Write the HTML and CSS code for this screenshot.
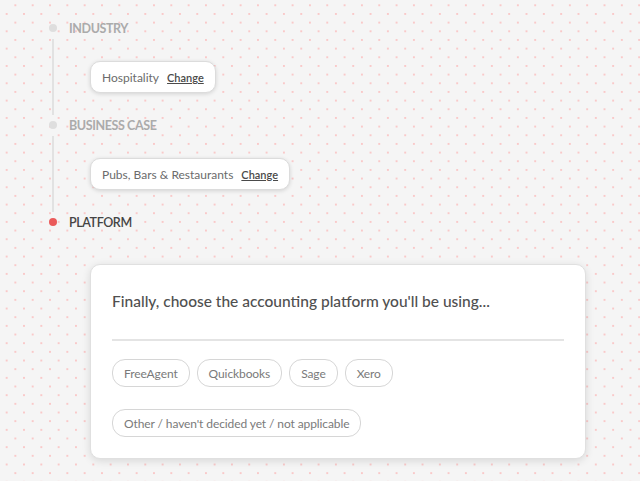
FILE: index.html
```html
<!DOCTYPE html>
<html lang="en">
<head>
<meta charset="utf-8">
<title>Choose platform</title>
<link rel="stylesheet" href="styles.css">
</head>
<body>
<main class="timeline">
  <section class="step done">
    <div class="step-head"><span class="dot"></span><span class="label">INDUSTRY</span></div>
    <div class="step-body">
      <div class="summary"><span class="value">Hospitality</span><a class="change" href="#">Change</a></div>
    </div>
  </section>
  <section class="step done">
    <div class="step-head"><span class="dot"></span><span class="label">BUSINESS CASE</span></div>
    <div class="step-body">
      <div class="summary"><span class="value">Pubs, Bars &amp; Restaurants</span><a class="change" href="#">Change</a></div>
    </div>
  </section>
  <section class="step active">
    <div class="step-head"><span class="dot"></span><span class="label">PLATFORM</span></div>
    <div class="card">
      <h2 class="question">Finally, choose the accounting platform you'll be using...</h2>
      <hr class="divider">
      <div class="options">
        <button class="pill">FreeAgent</button>
        <button class="pill">Quickbooks</button>
        <button class="pill">Sage</button>
        <button class="pill">Xero</button>
      </div>
      <div class="options second">
        <button class="pill">Other / haven't decided yet / not applicable</button>
      </div>
    </div>
  </section>
</main>
</body>
</html>
```
FILE: styles.css
```css
html, body {
  margin: 0;
  height: 100%;
}
body {
  font-family: "Lato", "Noto Sans", sans-serif;
  background-color: #f5f5f5;
  background-image:
    radial-gradient(circle, #f9c9c9 0.8px, transparent 1.2px),
    radial-gradient(circle, #f9c9c9 0.8px, transparent 1.2px);
  background-size: 17.33px 17.33px;
  background-position: 6.7px -3.4px, -2px 5.3px;
}
.timeline {
  padding: 20px 0 0 49px;
}
.step-head {
  display: flex;
  align-items: center;
  gap: 12px;
  height: 16px;
}
.dot {
  width: 8px;
  height: 8px;
  border-radius: 50%;
  background: #dedede;
  flex: none;
}
.label {
  font-size: 12.5px;
  font-weight: 700;
  color: #ababab;
  letter-spacing: -0.4px;
}
.active .dot {
  background: #ea5a5a;
}
.active .label {
  color: #444;
  font-weight: 600;
}
.step-body {
  margin: 3px 0 2px 3px;
  border-left: 2px solid #e2e2e2;
  padding: 22px 0 22px 36px;
}
.summary {
  display: inline-flex;
  align-items: center;
  gap: 8px;
  height: 32px;
  box-sizing: border-box;
  padding: 0 11px;
  background: #fff;
  border: 1px solid #dcdcdc;
  border-radius: 10px;
  box-shadow: 0 1px 4px rgba(0, 0, 0, 0.14);
}
.value {
  font-size: 12px;
  color: #6b6b6b;
}
.change {
  font-size: 11px;
  font-weight: 600;
  color: #4a4a4a;
  text-decoration: underline;
}
.card {
  margin: 34px 0 0 41px;
  width: 496px;
  box-sizing: border-box;
  background: #fff;
  border: 1px solid #e0e0e0;
  border-radius: 10px;
  box-shadow: 0 2px 8px rgba(0, 0, 0, 0.12);
  padding: 26px 21px 21px;
}
.question {
  margin: 0;
  font-size: 15.5px;
  font-weight: 500;
  line-height: 20px;
  color: #505050;
}
.divider {
  margin: 28px 0 0;
  border: 0;
  height: 2px;
  background: #e4e4e4;
}
.options {
  display: flex;
  gap: 7px;
  margin-top: 18px;
}
.options.second {
  margin-top: 22px;
}
.pill {
  height: 28px;
  padding: 0 11px;
  font-family: inherit;
  font-size: 12px;
  font-weight: 400;
  letter-spacing: -0.1px;
  color: #7a7a7a;
  background: #fff;
  border: 1px solid #d6d6d6;
  border-radius: 13px;
}
```
